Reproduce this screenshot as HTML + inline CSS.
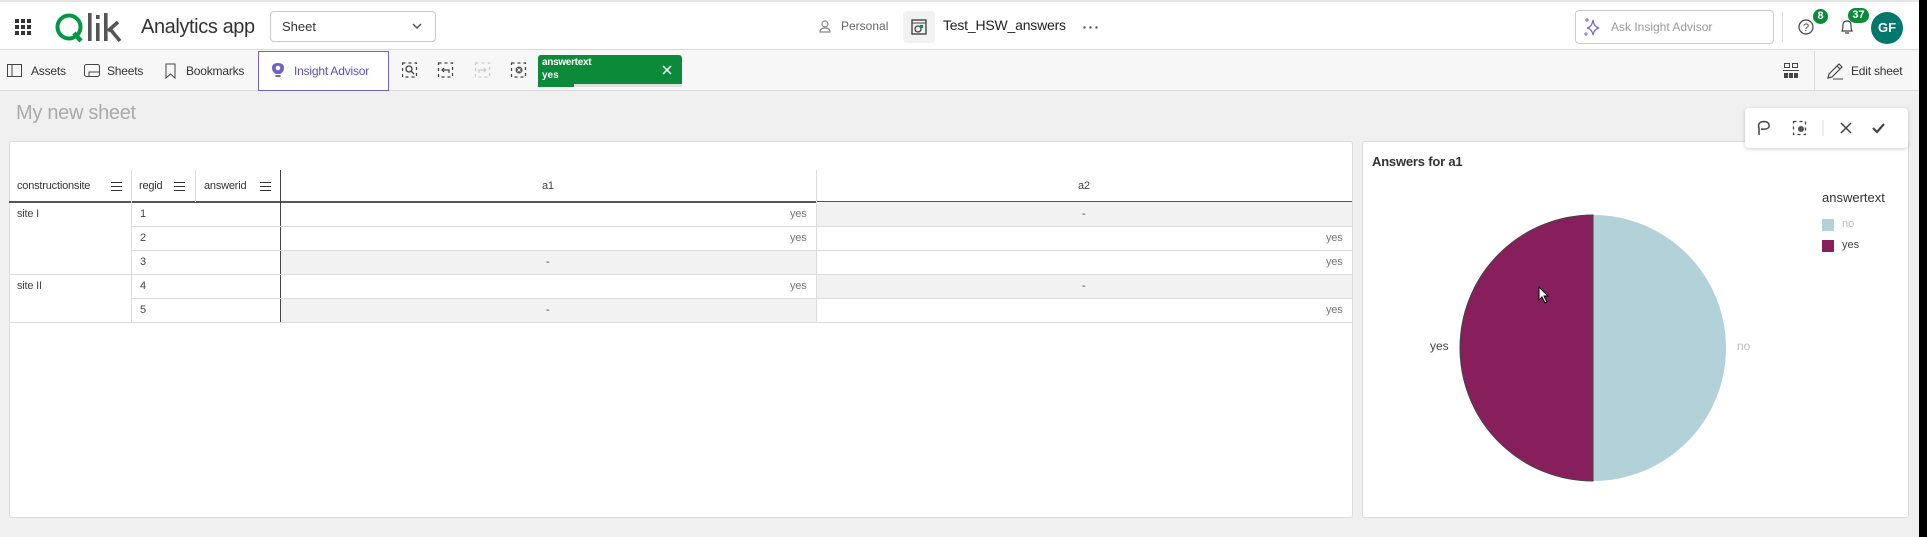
<!DOCTYPE html>
<html><head><meta charset="utf-8"><style>
*{margin:0;padding:0;box-sizing:border-box}
body{width:1927px;height:537px;overflow:hidden;background:#f0f0f0;font-family:"Liberation Sans",sans-serif;color:#404040;position:relative}
.a{position:absolute}
.t{white-space:nowrap}
.hdr{left:0;top:0;width:1919px;height:50px;background:#fff;border-top:2px solid #e6e6e6;border-bottom:1px solid #d9d9d9}
.tb{left:0;top:50px;width:1919px;height:41px;background:#f7f7f7;border-bottom:1px solid #d9d9d9}
.tl{font-size:12px;color:#333;top:64px;letter-spacing:-0.2px}
.panel{background:#fff;border:1px solid #dcdcdc;border-radius:3px}
.cell{font-size:11px;color:#444;letter-spacing:-0.2px}
.mn{position:absolute;width:11px;height:9px;border-top:1.5px solid #333;border-bottom:1.5px solid #333}
.mn:after{content:"";position:absolute;left:0;right:0;top:2.5px;height:1.5px;background:#333}
</style></head><body>
<div class="a hdr"></div>
<svg class="a" style="left:15px;top:19px" width="16" height="16"><g fill="#333"><rect x="0" y="0" width="4" height="4"/><rect x="6" y="0" width="4" height="4"/><rect x="12" y="0" width="4" height="4"/><rect x="0" y="6" width="4" height="4"/><rect x="6" y="6" width="4" height="4"/><rect x="12" y="6" width="4" height="4"/><rect x="0" y="12" width="4" height="4"/><rect x="6" y="12" width="4" height="4"/><rect x="12" y="12" width="4" height="4"/></g></svg>
<svg class="a" style="left:55px;top:11px" width="70" height="32" viewBox="0 0 70 32">
<circle cx="14" cy="16" r="11.5" fill="none" stroke="#009845" stroke-width="4"/>
<line x1="19" y1="22" x2="26" y2="30" stroke="#009845" stroke-width="4.5"/>
<rect x="33" y="2" width="3.6" height="28" fill="#555"/>
<rect x="41" y="12" width="3.6" height="18" fill="#555"/>
<rect x="41" y="4" width="3.6" height="4" fill="#555"/>
<rect x="49" y="2" width="3.6" height="28" fill="#555"/>
<path d="M53 20 L63 11 M55 18 L65 30" stroke="#555" stroke-width="3.6" fill="none"/>
</svg>
<div class="a t" style="left:141px;top:16px;font-size:20px;color:#333;letter-spacing:-0.4px">Analytics app</div>
<div class="a" style="left:270px;top:11px;width:166px;height:31px;border:1px solid #c8c8c8;border-radius:4px;background:#fff"></div>
<div class="a t" style="left:282px;top:19px;font-size:13px;color:#333">Sheet</div>
<svg class="a" style="left:412px;top:23px" width="10" height="7"><path d="M1 1 L5 5 L9 1" stroke="#555" stroke-width="1.5" fill="none"/></svg>
<svg class="a" style="left:819px;top:20px" width="12" height="13"><circle cx="6" cy="4" r="3" fill="none" stroke="#888" stroke-width="1.2"/><path d="M1 12 Q1 8 6 8 Q11 8 11 12 Z" fill="none" stroke="#888" stroke-width="1.2"/></svg>
<div class="a t" style="left:841px;top:19px;font-size:12px;color:#666">Personal</div>
<div class="a" style="left:903px;top:11px;width:32px;height:32px;background:#f2f2f2;border-radius:4px"></div>
<svg class="a" style="left:911px;top:19px" width="16" height="16"><rect x="1" y="1" width="14" height="14" fill="none" stroke="#444" stroke-width="1.4"/><line x1="1" y1="4" x2="15" y2="4" stroke="#444"/><circle cx="7" cy="10" r="3" fill="none" stroke="#444" stroke-width="1.3"/><rect x="9" y="6" width="3" height="3" fill="#009845"/></svg>
<div class="a t" style="left:943px;top:17px;font-size:14px;color:#222;letter-spacing:-0.2px">Test_HSW_answers</div>
<svg class="a" style="left:1083px;top:26px" width="16" height="3"><circle cx="1.5" cy="1.5" r="1.2" fill="#555"/><circle cx="7.5" cy="1.5" r="1.2" fill="#555"/><circle cx="13.5" cy="1.5" r="1.2" fill="#555"/></svg>
<div class="a" style="left:1575px;top:10px;width:199px;height:34px;border:1px solid #ccc;border-radius:4px;background:#fff"></div>
<svg class="a" style="left:1583px;top:17px" width="18" height="20"><path d="M10 3 Q11 10 16 11 Q11 12 10 18 Q9 12 4 11 Q9 10 10 3Z" fill="none" stroke="#7b68d6" stroke-width="1.2"/><path d="M4 1 v4 M2 3 h4 M3 15 v4 M1 17 h4" stroke="#7b68d6" stroke-width="1"/></svg>
<div class="a t" style="left:1611px;top:20px;font-size:12px;color:#999">Ask Insight Advisor</div>
<div class="a" style="left:1782px;top:12px;width:1px;height:30px;background:#ddd"></div>
<svg class="a" style="left:1798px;top:19px" width="16" height="16"><circle cx="8" cy="8" r="7" fill="none" stroke="#444" stroke-width="1.2"/><text x="8" y="12" font-size="11" text-anchor="middle" fill="#444" font-family="Liberation Sans">?</text></svg>
<div class="a" style="left:1813px;top:9px;width:15px;height:15px;border-radius:50%;background:#0b8a3a;color:#fff;font-size:11px;font-weight:bold;text-align:center;line-height:15px">8</div>
<svg class="a" style="left:1840px;top:18px" width="14" height="18"><path d="M2 13 Q3 11 3 7 Q3 3 7 3 Q11 3 11 7 Q11 11 12 13 Z M5 15 h4" fill="none" stroke="#444" stroke-width="1.2"/></svg>
<div class="a" style="left:1848px;top:8px;width:21px;height:15px;border-radius:8px;background:#0b8a3a;color:#fff;font-size:11px;font-weight:bold;text-align:center;line-height:15px">37</div>
<div class="a" style="left:1871px;top:12px;width:32px;height:32px;border-radius:50%;background:#00796b;color:#fff;font-size:13px;font-weight:bold;text-align:center;line-height:32px">GF</div>
<div class="a" style="left:1919px;top:0;width:8px;height:537px;background:#000"></div>
<div class="a tb"></div>
<svg class="a" style="left:7px;top:64px" width="15" height="13"><rect x="0.5" y="0.5" width="14" height="12" fill="none" stroke="#444"/><line x1="5" y1="0" x2="5" y2="13" stroke="#444"/></svg>
<div class="a t tl" style="left:31px">Assets</div>
<svg class="a" style="left:84px;top:64px" width="16" height="13"><rect x="0.5" y="0.5" width="15" height="12" rx="2" fill="none" stroke="#444"/><path d="M5 12.5 V8 H15" fill="none" stroke="#444"/></svg>
<div class="a t tl" style="left:107px">Sheets</div>
<svg class="a" style="left:165px;top:63px" width="11" height="16"><path d="M1 1 H10 V15 L5.5 11 L1 15 Z" fill="none" stroke="#444"/></svg>
<div class="a t tl" style="left:186px">Bookmarks</div>
<div class="a" style="left:258px;top:51px;width:131px;height:40px;border:1.5px solid #6e62c9;background:#fff"></div>
<svg class="a" style="left:271px;top:62px" width="14" height="17"><path d="M7 1 Q13 1 13 6 Q13 10 9 12 H5 Q1 10 1 6 Q1 1 7 1Z" fill="#6e62c9"/><circle cx="7" cy="6" r="2.3" fill="#fff"/><rect x="4.5" y="13" width="5" height="2" fill="#6e62c9"/></svg>
<div class="a t tl" style="left:294px;color:#5c4fc0">Insight Advisor</div>
<svg class="a" style="left:402px;top:62px" width="200" height="17">
<g fill="none" stroke="#444" stroke-width="1.3" stroke-dasharray="3 3"><rect x="0.5" y="1" width="14" height="14"/><rect x="36.5" y="1" width="14" height="14"/><rect x="109.5" y="1" width="14" height="14"/></g>
<rect x="73.5" y="1" width="14" height="14" fill="none" stroke="#ccc" stroke-width="1.3" stroke-dasharray="3 3"/>
<circle cx="7" cy="7" r="3" fill="none" stroke="#444" stroke-width="1.3"/><line x1="9" y1="9" x2="12" y2="12" stroke="#444" stroke-width="1.3"/>
<path d="M47 11 V8 H40 M42 6 L40 8 L42 10" fill="none" stroke="#444" stroke-width="1.2"/>
<path d="M77 11 V8 H84 M82 6 L84 8 L82 10" fill="none" stroke="#ccc" stroke-width="1.2"/>
<circle cx="117" cy="8" r="3.5" fill="#555"/><path d="M115.5 6.5 l3 3 M118.5 6.5 l-3 3" stroke="#fff" stroke-width="1"/>
</svg>
<div class="a" style="left:538px;top:55px;width:144px;height:32px;background:#0b8a3a;border-radius:3px 3px 0 0"></div>
<div class="a" style="left:538px;top:84px;width:144px;height:3px;background:#e0e0e0"></div>
<div class="a" style="left:538px;top:84px;width:36px;height:3px;background:#0b8a3a"></div>
<div class="a t" style="left:542px;top:57px;font-size:10px;font-weight:bold;color:#fff;letter-spacing:-0.3px">answertext</div>
<div class="a t" style="left:542px;top:70px;font-size:10px;font-weight:bold;color:#fff">yes</div>
<svg class="a" style="left:662px;top:65px" width="10" height="10"><path d="M1 1 L9 9 M9 1 L1 9" stroke="#fff" stroke-width="1.5"/></svg>
<svg class="a" style="left:1783px;top:63px" width="16" height="16"><g fill="none" stroke="#444"><rect x="1.5" y="0.5" width="5" height="4"/><rect x="9.5" y="0.5" width="5" height="4"/></g><rect x="0" y="7" width="16" height="1" fill="#444"/><rect x="1" y="10" width="4" height="5" fill="#444"/><rect x="6" y="10" width="4" height="5" fill="#444"/><rect x="11" y="10" width="4" height="5" fill="#444"/></svg>
<div class="a" style="left:1814px;top:51px;width:1px;height:40px;background:#ddd"></div>
<svg class="a" style="left:1826px;top:62px" width="18" height="18"><path d="M2 16 L3 12 L13 2 L16 5 L6 15 Z M11 4 L14 7" fill="none" stroke="#444" stroke-width="1.2"/><line x1="7" y1="17" x2="17" y2="17" stroke="#444"/></svg>
<div class="a t tl" style="left:1851px">Edit sheet</div>
<div class="a t" style="left:16px;top:102px;font-size:20px;color:#aaa;letter-spacing:-0.3px">My new sheet</div>
<div class="a panel" style="left:9px;top:141px;width:1344px;height:377px"></div>
<div class="a" style="left:9px;top:201px;width:1343px;height:1.5px;background:#555"></div>
<div class="a" style="left:280px;top:170px;width:1px;height:152px;background:#444"></div>
<div class="a" style="left:131px;top:170px;width:1px;height:32px;background:#ddd"></div>
<div class="a" style="left:195px;top:170px;width:1px;height:32px;background:#ddd"></div>
<div class="a" style="left:816px;top:170px;width:1px;height:152px;background:#ddd"></div>
<div class="a" style="left:131px;top:202px;width:1px;height:120px;background:#ddd"></div>
<div class="a t cell" style="left:17px;top:180px;color:#333">constructionsite</div>
<div class="mn" style="left:111px;top:182px"></div>
<div class="a t cell" style="left:139px;top:180px;color:#333">regid</div>
<div class="mn" style="left:174px;top:182px"></div>
<div class="a t cell" style="left:204px;top:180px;color:#333">answerid</div>
<div class="mn" style="left:260px;top:182px"></div>
<div class="a t cell" style="left:542px;top:180px">a1</div>
<div class="a t cell" style="left:1078px;top:180px">a2</div>
<div class="a" style="left:281px;top:250px;width:535px;height:24px;background:#f2f2f2"></div>
<div class="a" style="left:281px;top:298px;width:535px;height:24px;background:#f2f2f2"></div>
<div class="a" style="left:817px;top:202px;width:535px;height:24px;background:#f2f2f2"></div>
<div class="a" style="left:817px;top:274px;width:535px;height:24px;background:#f2f2f2"></div>
<div class="a" style="left:131px;top:226px;width:1221px;height:1px;background:#ddd"></div>
<div class="a" style="left:131px;top:250px;width:1221px;height:1px;background:#ddd"></div>
<div class="a" style="left:9px;top:274px;width:1343px;height:1px;background:#ddd"></div>
<div class="a" style="left:131px;top:298px;width:1221px;height:1px;background:#ddd"></div>
<div class="a" style="left:9px;top:322px;width:1343px;height:1px;background:#ddd"></div>
<div class="a t cell" style="left:17px;top:208px">site I</div>
<div class="a t cell" style="left:17px;top:280px">site II</div>
<div class="a t cell" style="left:140px;top:208px">1</div>
<div class="a t cell" style="left:140px;top:232px">2</div>
<div class="a t cell" style="left:140px;top:256px">3</div>
<div class="a t cell" style="left:140px;top:280px">4</div>
<div class="a t cell" style="left:140px;top:304px">5</div>
<div class="a t cell" style="left:790px;top:208px;color:#777">yes</div>
<div class="a t cell" style="left:790px;top:232px;color:#777">yes</div>
<div class="a t cell" style="left:546px;top:256px">-</div>
<div class="a t cell" style="left:790px;top:280px;color:#777">yes</div>
<div class="a t cell" style="left:546px;top:304px">-</div>
<div class="a t cell" style="left:1082px;top:208px">-</div>
<div class="a t cell" style="left:1326px;top:232px;color:#777">yes</div>
<div class="a t cell" style="left:1326px;top:256px;color:#777">yes</div>
<div class="a t cell" style="left:1082px;top:280px">-</div>
<div class="a t cell" style="left:1326px;top:304px;color:#777">yes</div>
<div class="a panel" style="left:1362px;top:141px;width:547px;height:377px"></div>
<div class="a t" style="left:1372px;top:154px;font-size:13px;font-weight:bold;color:#333;letter-spacing:-0.2px">Answers for a1</div>
<svg class="a" style="left:1455px;top:210px" width="276" height="276">
<path d="M138 5 A133 133 0 0 1 138 271 Z" fill="#b3d1d9"/>
<path d="M138 5 A133 133 0 0 0 138 271 Z" fill="#871f5c" stroke="#444" stroke-width="1"/>
</svg>
<svg class="a" style="left:1538px;top:286px" width="12" height="18"><path d="M1 1 V14 L4 11 L7 17 L9 16 L6 10 L10 10 Z" fill="#fff" stroke="#000" stroke-width="1"/></svg>
<div class="a t" style="left:1430px;top:339px;font-size:12px;color:#444">yes</div>
<div class="a t" style="left:1737px;top:339px;font-size:12px;color:#bbb">no</div>
<div class="a t" style="left:1822px;top:190px;font-size:13px;color:#333">answertext</div>
<div class="a" style="left:1822px;top:219px;width:12px;height:12px;background:#b3d1d9"></div>
<div class="a t" style="left:1842px;top:218px;font-size:11px;color:#bbb">no</div>
<div class="a" style="left:1822px;top:240px;width:12px;height:12px;background:#871f5c"></div>
<div class="a t" style="left:1842px;top:239px;font-size:11px;color:#444">yes</div>
<div class="a" style="left:1745px;top:108px;width:163px;height:40px;background:#fff;border-radius:4px;box-shadow:0 1px 4px rgba(0,0,0,0.2)"></div>
<svg class="a" style="left:1756px;top:120px" width="150" height="16">
<path d="M3 15 V8 Q1 2 8 1.5 Q14 2 13 7 Q11 10 5 9" fill="none" stroke="#444" stroke-width="1.5"/>
<rect x="37.5" y="1.5" width="12" height="13" fill="none" stroke="#444" stroke-width="1.3" stroke-dasharray="3 3"/>
<circle cx="45" cy="9" r="3" fill="#555"/>
<line x1="67" y1="-2" x2="67" y2="18" stroke="#ddd"/>
<path d="M85 3 L95 13 M95 3 L85 13" stroke="#444" stroke-width="1.5"/>
<path d="M117 8 L121 12 L128 4" fill="none" stroke="#444" stroke-width="2.2"/>
</svg>
</body></html>
